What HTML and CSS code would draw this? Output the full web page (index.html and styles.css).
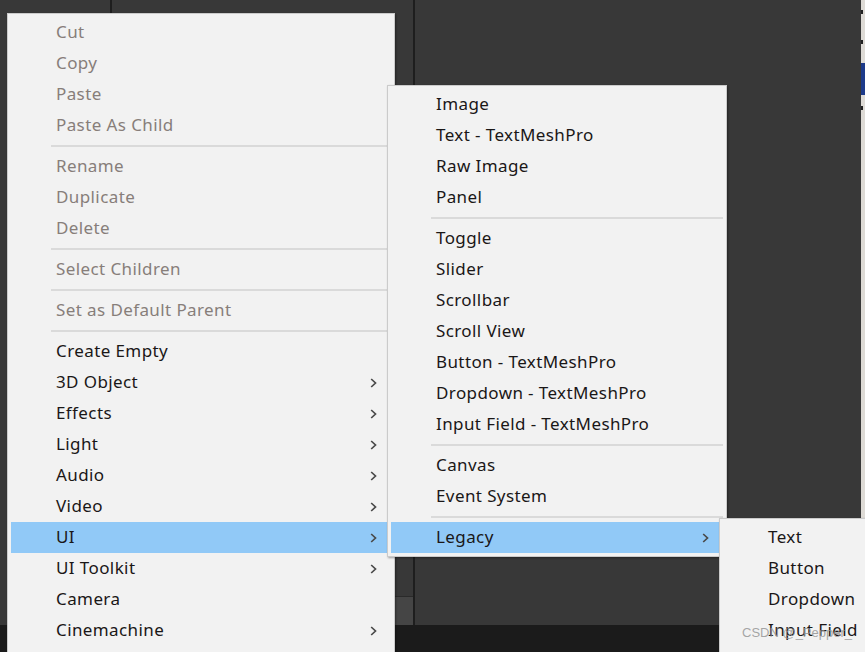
FILE: index.html
```html
<!DOCTYPE html>
<html lang="en">
<head>
    <meta charset="UTF-8">
    <meta name="viewport" content="width=device-width, initial-scale=1.0">
    <title>Hierarchy - Context Menu</title>
    <link rel="stylesheet" href="styles.css">
</head>
<body>

    <div class="editor">
        <div class="split split-top"></div>
        <div class="split split-main"></div>
        <div class="dock-tab"></div>
        <div class="statusbar"></div>
        <div class="other-window">
            <span class="tick t1"></span>
            <span class="tick t2"></span>
            <span class="selected"></span>
            <span class="tick t3"></span>
        </div>
    </div>

    <!-- Hierarchy context menu -->
    <div class="menu menu-main">
        <div class="item disabled">Cut</div>
        <div class="item disabled">Copy</div>
        <div class="item disabled">Paste</div>
        <div class="item disabled">Paste As Child</div>
        <div class="sep"></div>
        <div class="item disabled">Rename</div>
        <div class="item disabled">Duplicate</div>
        <div class="item disabled">Delete</div>
        <div class="sep"></div>
        <div class="item disabled">Select Children</div>
        <div class="sep"></div>
        <div class="item disabled">Set as Default Parent</div>
        <div class="sep"></div>
        <div class="item">Create Empty</div>
        <div class="item sub">3D Object</div>
        <div class="item sub">Effects</div>
        <div class="item sub">Light</div>
        <div class="item sub">Audio</div>
        <div class="item sub">Video</div>
        <div class="item sub active">UI</div>
        <div class="item sub">UI Toolkit</div>
        <div class="item">Camera</div>
        <div class="item sub">Cinemachine</div>
    </div>

    <!-- UI submenu -->
    <div class="menu menu-ui">
        <div class="item">Image</div>
        <div class="item">Text - TextMeshPro</div>
        <div class="item">Raw Image</div>
        <div class="item">Panel</div>
        <div class="sep"></div>
        <div class="item">Toggle</div>
        <div class="item">Slider</div>
        <div class="item">Scrollbar</div>
        <div class="item">Scroll View</div>
        <div class="item">Button - TextMeshPro</div>
        <div class="item">Dropdown - TextMeshPro</div>
        <div class="item">Input Field - TextMeshPro</div>
        <div class="sep"></div>
        <div class="item">Canvas</div>
        <div class="item">Event System</div>
        <div class="sep"></div>
        <div class="item sub active">Legacy</div>
    </div>

    <!-- Legacy submenu -->
    <div class="menu menu-legacy">
        <div class="item">Text</div>
        <div class="item">Button</div>
        <div class="item">Dropdown</div>
        <div class="item">Input Field</div>
    </div>

    <div class="watermark">CSDN @_Pepper_</div>

    <script>
        // chevrons for the items that open a submenu
        const chevron = '<svg class="arrow" width="7" height="10" viewBox="0 0 7 10">' +
            '<polyline points="1.2,1 5.5,5 1.2,9" fill="none" stroke="#4a4a4a" stroke-width="1.7"/></svg>';
        for (let item of document.querySelectorAll(".item.sub")) {
            item.insertAdjacentHTML("beforeend", chevron);
        }
    </script>

</body>
</html>
```

FILE: styles.css
```css
body {
    margin: 0;
    width: 865px;
    height: 652px;
    overflow: hidden;
    background: #383838;
    font-family: 'Noto Sans', 'Open Sans', sans-serif;
    font-size: 17px;
    letter-spacing: 0.4px;
    position: relative;
}
.editor {
    position: absolute;
    inset: 0;
}
.split {
    position: absolute;
    width: 2px;
    background: #1e1e1e;
}
.split-top {
    left: 110px;
    top: 0;
    height: 20px;
}
.split-main {
    left: 413px;
    top: 0;
    height: 625px;
}
.dock-tab {
    position: absolute;
    left: 395px;
    top: 596px;
    width: 18px;
    height: 29px;
    background: #454545;
    border-top: 1px solid #2a2a2a;
}
.statusbar {
    position: absolute;
    left: 0;
    right: 0;
    top: 625px;
    bottom: 0;
    background: #1b1b1b;
}
.other-window {
    position: absolute;
    left: 861px;
    top: 0;
    width: 4px;
    height: 652px;
    background: #dedbd6;
}
.other-window .selected {
    position: absolute;
    left: 0;
    top: 63px;
    width: 4px;
    height: 32px;
    background: #1d3a8a;
}
.tick {
    position: absolute;
    left: 0;
    width: 2px;
    height: 4px;
    background: #222;
}
.t1 { top: 10px; }
.t2 { top: 40px; }
.t3 { top: 106px; }

.menu {
    position: absolute;
    background: #f2f2f2;
    border: 1px solid #cbcbcb;
    box-shadow: 1px 1px 2px rgba(0, 0, 0, 0.35);
    padding: 3px 3px;
    box-sizing: border-box;
}
.menu-main {
    left: 7px;
    top: 13px;
    width: 388px;
    height: 660px;
}
.menu-ui {
    left: 387px;
    top: 85px;
    width: 340px;
    height: 472px;
}
.menu-legacy {
    left: 719px;
    top: 518px;
    width: 160px;
    height: 150px;
}
.item {
    height: 29px;
    line-height: 29px;
    padding: 0 0 2px 45px;
    color: #1a1717;
    white-space: nowrap;
    position: relative;
}
.item.disabled {
    color: #877e7a;
}
.item.active {
    background: #91c9f7;
}
.sep {
    height: 2px;
    margin: 4px 0 4px 40px;
    background: #dadada;
}
.arrow {
    position: absolute;
    right: 14px;
    top: 11px;
}
.watermark {
    position: absolute;
    left: 742px;
    top: 625px;
    font-family: 'Liberation Sans', sans-serif;
    font-size: 13px;
    letter-spacing: 0;
    color: rgba(150, 150, 150, 0.85);
}
```
